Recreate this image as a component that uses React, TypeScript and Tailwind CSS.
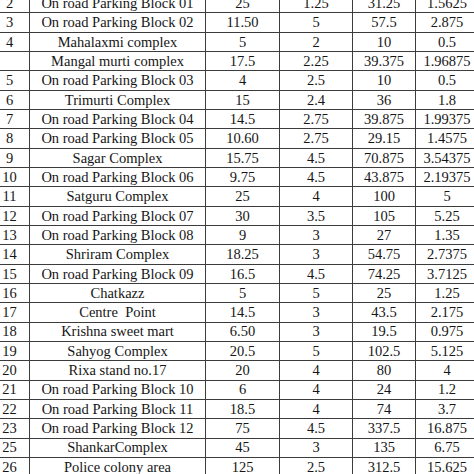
const rows: [string, string, string, string, string, string][] = [
  ["2", "On road Parking Block 01", "25", "1.25", "31.25", "1.5625"],
  ["3", "On road Parking Block 02", "11.50", "5", "57.5", "2.875"],
  ["4", "Mahalaxmi complex", "5", "2", "10", "0.5"],
  ["", "Mangal murti complex", "17.5", "2.25", "39.375", "1.96875"],
  ["5", "On road Parking Block 03", "4", "2.5", "10", "0.5"],
  ["6", "Trimurti Complex", "15", "2.4", "36", "1.8"],
  ["7", "On road Parking Block 04", "14.5", "2.75", "39.875", "1.99375"],
  ["8", "On road Parking Block 05", "10.60", "2.75", "29.15", "1.4575"],
  ["9", "Sagar Complex", "15.75", "4.5", "70.875", "3.54375"],
  ["10", "On road Parking Block 06", "9.75", "4.5", "43.875", "2.19375"],
  ["11", "Satguru Complex", "25", "4", "100", "5"],
  ["12", "On road Parking Block 07", "30", "3.5", "105", "5.25"],
  ["13", "On road Parking Block 08", "9", "3", "27", "1.35"],
  ["14", "Shriram Complex", "18.25", "3", "54.75", "2.7375"],
  ["15", "On road Parking Block 09", "16.5", "4.5", "74.25", "3.7125"],
  ["16", "Chatkazz", "5", "5", "25", "1.25"],
  ["17", "Centre\u00a0 Point", "14.5", "3", "43.5", "2.175"],
  ["18", "Krishna sweet mart", "6.50", "3", "19.5", "0.975"],
  ["19", "Sahyog Complex", "20.5", "5", "102.5", "5.125"],
  ["20", "Rixa stand no.17", "20", "4", "80", "4"],
  ["21", "On road Parking Block 10", "6", "4", "24", "1.2"],
  ["22", "On road Parking Block 11", "18.5", "4", "74", "3.7"],
  ["23", "On road Parking Block 12", "75", "4.5", "337.5", "16.875"],
  ["25", "ShankarComplex", "45", "3", "135", "6.75"],
  ["26", "Police colony area", "125", "2.5", "312.5", "15.625"],
];

export default function App() {
  return (
    <div className="h-[474px] w-[474px] overflow-hidden bg-white">
      <div
        className="-ml-[10px] -mt-[6px] w-[500px] text-[14.5px] leading-none text-[#161616]"
        style={{ fontFamily: '"Liberation Serif", "Times New Roman", serif' }}
      >
        {rows.map((r, i) => (
          <div
            key={i}
            className="grid h-[19.33px] grid-cols-[40px_176px_74px_73px_63px_84px] border-b border-[#3c3c3c]"
          >
            {r.map((c, j) => (
              <div
                key={j}
                className={
                  j < 5
                    ? "flex items-center justify-center whitespace-pre border-r border-[#3c3c3c]"
                    : "flex items-center justify-center whitespace-pre pr-[22px]"
                }
              >
                {c}
              </div>
            ))}
          </div>
        ))}
      </div>
    </div>
  );
}
